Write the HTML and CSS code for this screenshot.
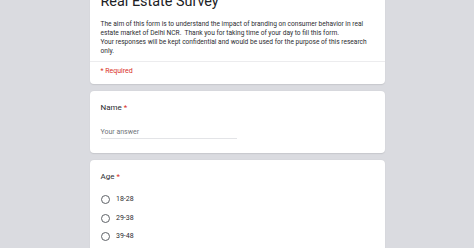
FILE: index.html
```html
<!DOCTYPE html>
<html lang="en">
<head>
<meta charset="utf-8">
<title>Real Estate Survey</title>
<link rel="stylesheet" href="styles.css">
</head>
<body>
<main class="form">
  <section class="card intro">
    <div class="intro-main">
      <h1 class="title">Real Estate Survey</h1>
      <p class="desc">The aim of this form is to understand the impact of branding on consumer behavior in real estate market of Delhi NCR.&nbsp; Thank you for taking time of your day to fill this form.<br>Your responses will be kept confidential and would be used for the purpose of this research only.</p>
    </div>
    <div class="required-note">* Required</div>
  </section>

  <section class="card question">
    <div class="q-title">Name <span class="star">*</span></div>
    <div class="answer">Your answer</div>
  </section>

  <section class="card question options-card">
    <div class="q-title">Age <span class="star">*</span></div>
    <ul class="options">
      <li class="option"><span class="radio"></span><span class="opt-label">18-28</span></li>
      <li class="option"><span class="radio"></span><span class="opt-label">29-38</span></li>
      <li class="option"><span class="radio"></span><span class="opt-label">39-48</span></li>
    </ul>
  </section>
</main>
</body>
</html>
```
FILE: styles.css
```css
html, body {
  margin: 0;
  padding: 0;
}
body {
  background: #dadbe0;
  font-family: Roboto, "Liberation Sans", Arial, sans-serif;
  color: #202124;
  overflow: hidden;
  height: 248px;
}
.form {
  width: 295px;
  margin: -16px auto 0;
  display: flex;
  flex-direction: column;
  gap: 7px;
}
.card {
  background: #ffffff;
  border-radius: 4px;
  box-shadow: 0 0.5px 1px rgba(60, 64, 67, 0.12);
}
.intro-main {
  padding: 8px 11px 4.5px;
  border-bottom: 1px solid #ececee;
}
.title {
  margin: 0;
  font-size: 14.4px;
  line-height: 20px;
  font-weight: 400;
  color: #202124;
}
.desc {
  margin: 7.5px 0 0;
  font-size: 6.6px;
  line-height: 9.2px;
  color: #2b2c30;
}
.required-note {
  padding: 5px 11px 8px;
  font-size: 7px;
  line-height: 9px;
  color: #d93025;
}
.question {
  padding: 12px 11px 14px;
}
.options-card {
  padding-bottom: 20px;
}
.q-title {
  font-size: 8px;
  line-height: 10px;
  color: #2b2c30;
}
.star {
  color: #d93025;
}
.answer {
  margin-top: 15px;
  width: 136px;
  font-size: 7px;
  line-height: 9px;
  color: #70757a;
  padding-bottom: 1.5px;
  border-bottom: 1px solid #e3e4e7;
}
.options {
  list-style: none;
  margin: 8.5px 0 0;
  padding: 0;
}
.option {
  height: 18.3px;
  display: flex;
  align-items: center;
  gap: 6.5px;
}
.radio {
  width: 7px;
  height: 7px;
  border: 1.2px solid #5f6368;
  border-radius: 50%;
  flex: none;
}
.opt-label {
  font-size: 7px;
  line-height: 9px;
  color: #2b2c30;
}
```
